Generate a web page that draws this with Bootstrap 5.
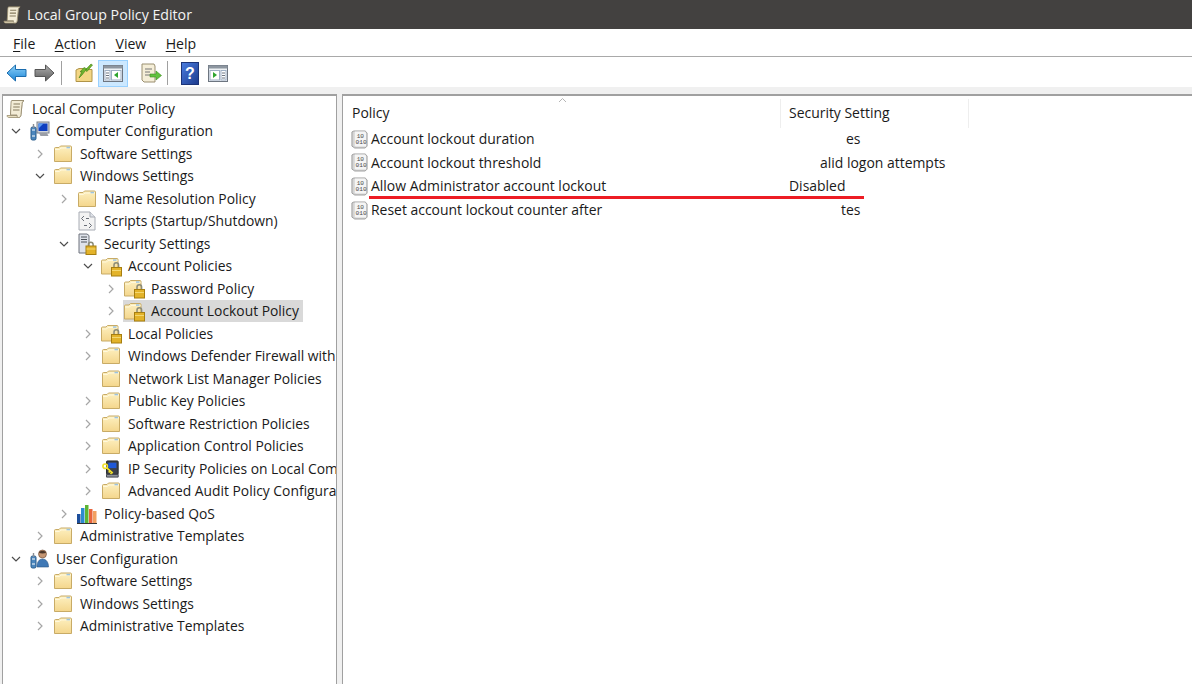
<!DOCTYPE html>
<html lang="en">
<head>
<meta charset="utf-8">
<title>Local Group Policy Editor</title>
<link href="https://cdn.jsdelivr.net/npm/bootstrap@5.3.0/dist/css/bootstrap.min.css" rel="stylesheet">
<style>
html,body{height:100%;}
body{font-family:"Open Sans","Noto Sans",sans-serif;font-size:13.85px;color:#1a1a1a;background:#f0f0f0;overflow:hidden;}
.app-shell{height:684px;position:relative;}
.title-strip{height:29px;background:#434140;color:#f4f4f4;padding-left:3px;gap:5px;font-size:14.2px;}
.menu-strip{height:28px;background:#fff;border-bottom:1px solid #a9a9a9;padding-left:13px;padding-top:2px;gap:19.400px;font-size:14.1px;}
.menu-strip span u{text-underline-offset:2px;text-decoration-thickness:1px;}
.tool-strip{height:30px;background:#fff;padding-left:5px;padding-top:2px;}
.tool-btn{width:22px;height:27px;display:flex;align-items:center;justify-content:center;}
.tool-btn.active-tool{width:30px;background:#cce8ff;border:1px solid #99d1ff;}
.tool-sep{width:1px;height:24px;background:#a0a0a0;}
.t-fwd{margin:0 6px;}
.t-sep1{margin-right:12px;margin-left:0;}
.t-up{margin-left:2px;margin-right:3px;}
.t-exp{margin-left:9px;margin-right:5px;}
.t-sep2{margin-right:11px;}
.t-help{margin-right:6px;}
.gap-band{height:7px;background:#f0f0f0;}
.panes{gap:5px;padding-left:2px;background:#f0f0f0;}
.tree-pane{width:335px;background:#fff;border-top:2px solid #a0a0a0;border-left:1px solid #a0a0a0;border-right:1px solid #a0a0a0;overflow:hidden;padding-top:1.5px;}
.detail-pane{background:#fff;border-top:2px solid #a0a0a0;border-left:1px solid #a0a0a0;position:relative;overflow:hidden;font-size:13.95px;}
.tree-row{height:22.5px;white-space:nowrap;}
.tree-row svg{flex:none;}
.chev{width:10px;height:10px;flex:none;margin-right:9px;}
.lv0{padding-left:3px;}
.lv1{padding-left:8px;}
.lv2{padding-left:32px;}
.lv3{padding-left:56px;}
.lv4{padding-left:80px;}
.lv5{padding-left:103px;}
.tree-label{margin-left:8px;padding-right:4px;line-height:22px;}
.lv0 .tree-label,.lv1 .tree-label{margin-left:6px;}
.wide-ico{margin-left:-1px;}
.wide-ico + .tree-label{margin-left:6px;}
.wide-ico.ico-20 + .tree-label{margin-left:7px;}
.chosen-item{background:#d9d9d9;margin-left:-2px;padding-left:2px;height:22px;}
.col-heads{height:31.6px;padding-top:3px;}
.head-one{width:438px;padding-left:9px;border-right:1px solid #eee;}
.head-two{width:188px;padding-left:8px;border-right:1px solid #eee;}
.sort-caret{position:absolute;left:215px;top:1px;}
.pol-row{height:23.6px;white-space:nowrap;}
.pol-name{width:438px;padding-left:8px;gap:3px;}
.pol-val{padding-left:8px;}
.cut-es{padding-left:65px;}
.cut-alid{padding-left:39px;}
.cut-tes{padding-left:60px;}
.red-rule{position:absolute;left:26px;top:100px;width:495px;height:3px;background:#ed1c24;}
</style>
</head>
<body>
<svg width="0" height="0" class="position-absolute">
<defs>
<linearGradient id="fy" x1="0" y1="0" x2="0" y2="1"><stop offset="0" stop-color="#fdf0c0"/><stop offset="1" stop-color="#f4d68c"/></linearGradient>
<linearGradient id="bl" x1="0" y1="0" x2="0" y2="1"><stop offset="0" stop-color="#8fd2f8"/><stop offset="1" stop-color="#1c86d8"/></linearGradient>
<linearGradient id="gr" x1="0" y1="0" x2="0" y2="1"><stop offset="0" stop-color="#b0b0b0"/><stop offset="1" stop-color="#5c5c5c"/></linearGradient>
<linearGradient id="hb" x1="0" y1="0" x2="1" y2="1"><stop offset="0" stop-color="#4a7de0"/><stop offset="1" stop-color="#1c3a8c"/></linearGradient>
<symbol id="scroll" viewBox="0 0 20 20">
<path d="M6 1.500h12c-1.500 1-2 2-2 4l-1 10c-.2 2-1 3-2.500 3H3c-1.200 0-2-.8-2-2h9.500l3-.2L4.500 15z" fill="#e9dfc0" stroke="#9a8f70" stroke-width=".8"/>
<path d="M6 1.500h12c-1.500 1-2 2-2 4l-1 10c-.2 2-1 3-2.500 3-1 0-1.800-1-1.500-2.500H4.500L5 4c.1-1.500.3-2.500 1-2.500z" fill="#f3ecd6" stroke="#8f8468" stroke-width=".8"/>
<path d="M7.500 5h6.500M7.200 8h6.500M7 11h6.500" stroke="#857a5e" stroke-width="1.200"/>
</symbol>
<symbol id="folder" viewBox="0 0 18 18">
<path d="M.5 16.500V3.500c0-.6.400-1 1-1h3.500l1.500-1.500h10c.6 0 1 .4 1 1V16.500z" fill="url(#fy)" stroke="#c8ab66"/>
<path d="M1 4.500h4.500l1.500-1.500h10" fill="none" stroke="#fff8dc"/>
<path d="M12.500 1.800h3.500v1.500h-3.500z" fill="#9cc3e0"/>
</symbol>
<symbol id="lockfolder" viewBox="0 0 21 21">
<path d="M.5 18V5c0-.6.400-1 1-1h3.500L6.500 2.500h9.500c.6 0 1 .4 1 1V18z" fill="url(#fy)" stroke="#c8ab66"/>
<path d="M1 6h4.500l1.500-1.500h9.500" fill="none" stroke="#fff8dc"/>
<path d="M12 3.300h3.500v1.500h-3.500z" fill="#9cc3e0"/>
<path d="M13 11.500V9a2.300 2.300 0 0 1 4.600 0v2.500" fill="none" stroke="#8c8c78" stroke-width="1.500"/>
<rect x="10.500" y="11.500" width="10" height="8.500" fill="#e3b32a" stroke="#a67e10"/>
<path d="M11 14.500h9" stroke="#f4d870"/>
</symbol>
<symbol id="pc" viewBox="0 0 20 20">
<rect x="7" y="1" width="12" height="11" fill="#cfd3da" stroke="#7d828c"/>
<rect x="8.500" y="2.500" width="9" height="7.500" fill="#0f3fc0"/>
<path d="M8.500 2.500h5l-5 5z" fill="#5b9bf0"/>
<path d="M9 12h8l1.500 3h-8z" fill="#9a9ea6"/>
<rect x="1" y="6" width="5" height="13" rx="1.500" fill="#4b86bd" stroke="#2a5c8c"/>
<path d="M2 9h3M2 15h3" stroke="#fff" stroke-width="1.200"/>
<rect x="2.800" y="3" width="1.400" height="4" fill="#8a8f96"/>
</symbol>
<symbol id="usercfg" viewBox="0 0 20 20">
<circle cx="12.500" cy="5" r="4" fill="#c59673" stroke="#6b4630" stroke-width=".6"/>
<path d="M9 4c.5-3 6.500-3 7 0-2 .5-5 .5-7 0z" fill="#4b372a"/>
<path d="M7 18c0-5 2-8 5.500-8s6 3 6 8z" fill="#3f78b5" stroke="#2a5584" stroke-width=".6"/>
<rect x="1" y="7" width="5" height="12" rx="1.500" fill="#4b86bd" stroke="#2a5c8c"/>
<path d="M2 10h3M2 15h3" stroke="#fff" stroke-width="1.200"/>
<rect x="2.800" y="4" width="1.400" height="4" fill="#8a8f96"/>
</symbol>
<symbol id="script" viewBox="0 0 18 20">
<path d="M1 1h11l5 5v13H1z" fill="#f3f3f3" stroke="#a8acb4"/>
<path d="M12 1v5h5" fill="#dfe2e8" stroke="#a8acb4"/>
<path d="M6 5L3.500 7.500 6 10M8 7.500h3M11 12l2.500 2.500L11 17M6 14.500h3" fill="none" stroke="#6a6f78"/>
</symbol>
<symbol id="server" viewBox="0 0 20 22">
<path d="M2 1h8l2 1.500V20H2z" fill="#dfe3ea" stroke="#6e737c"/>
<path d="M4 4h6M4 6.500h6M4 9h6" stroke="#4d525a"/>
<path d="M11.500 13v-1.500a2.300 2.300 0 0 1 4.600 0V13" fill="none" stroke="#8c8c78" stroke-width="1.500"/>
<rect x="9" y="13" width="10" height="8.500" fill="#e3b32a" stroke="#a67e10"/>
<path d="M9.500 16h9" stroke="#f4d870"/>
</symbol>
<symbol id="ipsec" viewBox="0 0 20 20">
<rect x="5" y="1" width="13" height="15" rx="1" fill="#3d4148" stroke="#1f2226"/>
<rect x="7" y="3" width="9" height="6" fill="#1f58d8"/>
<path d="M5 16h13v3H5z" fill="#8c9098" stroke="#3d4148"/>
<circle cx="3.500" cy="7" r="2.500" fill="none" stroke="#f2e02a" stroke-width="1.800"/>
<path d="M5 8.500l7 6M9 12l-1.500 2M11 13.500l-1.500 2" stroke="#f2e02a" stroke-width="1.800" fill="none"/>
</symbol>
<symbol id="qos" viewBox="0 0 20 20">
<rect x="0" y="10" width="3.500" height="9" fill="#1d4f9c"/>
<rect x="4" y="4" width="3.500" height="15" fill="#2c8bd0"/>
<rect x="8" y="1" width="3.500" height="18" fill="#5cb534"/>
<rect x="12" y="5" width="3.500" height="14" fill="#e8643c"/>
<rect x="16" y="7" width="3.500" height="12" fill="#f2a060"/>
<path d="M0 19.500h20" stroke="#333"/>
</symbol>
<symbol id="policy" viewBox="0 0 18 20">
<path d="M1 2l2-1h12l2 2v14l-2 2H4l-3-2z" fill="#d5d5d5" stroke="#9a9a9a"/>
<path d="M4 1.500h10.500L16 3v14.500H5L4 16z" fill="#f5f5f5"/>
<text x="6" y="8" font-size="6.500" font-family="Liberation Mono,monospace" fill="#4a4a4a">10</text>
<text x="4.800" y="15" font-size="6.500" font-family="Liberation Mono,monospace" fill="#4a4a4a">010</text>
</symbol>
<symbol id="chevr" viewBox="0 0 10 10"><path d="M3 1l4 4-4 4" fill="none" stroke="#a6a6a6" stroke-width="1.200"/></symbol>
<symbol id="chevd" viewBox="0 0 10 10"><path d="M1 3l4 4 4-4" fill="none" stroke="#4d4d4d" stroke-width="1.200"/></symbol>
</defs>
</svg>

<div class="app-shell d-flex flex-column">
  <div class="title-strip d-flex align-items-center">
    <svg width="19" height="20"><use href="#scroll"/></svg>
    <span>Local Group Policy Editor</span>
  </div>
  <div class="menu-strip d-flex align-items-center">
    <span><u>F</u>ile</span><span><u>A</u>ction</span><span><u>V</u>iew</span><span><u>H</u>elp</span>
  </div>
  <div class="tool-strip d-flex align-items-center">
    <div class="tool-btn"><svg width="21" height="18" viewBox="0 0 21 18"><path d="M1 9L9.500 1v4.500H20v7H9.500V17z" fill="url(#bl)" stroke="#1a6cae" stroke-linejoin="round"/></svg></div>
    <div class="tool-btn t-fwd"><svg width="21" height="18" viewBox="0 0 21 18"><path d="M20 9L11.500 1v4.500H1v7h10.500V17z" fill="url(#gr)" stroke="#555" stroke-linejoin="round"/></svg></div>
    <div class="tool-sep t-sep1"></div>
    <div class="tool-btn"><svg width="20" height="20" viewBox="0 0 20 20"><path d="M1 18.500V7l3-1.500h5l1 1h7v12z" fill="#f3d684" stroke="#b09448"/><path d="M4 15l3-6.500-2 .5 4-4.500L12 6l-1.500.8L16 1l1.500 1L12 8.500l-1.500-1L7 12z" fill="#6fb52e" stroke="#3f7f14" stroke-width=".6"/></svg></div>
    <div class="tool-btn active-tool t-up"><svg width="20" height="17" viewBox="0 0 20 17"><rect x=".5" y=".5" width="19" height="16" fill="#eef1f4" stroke="#6d7580"/><path d="M.5.5h19v3H.5z" fill="#8d96a0"/><rect x="2" y="5.500" width="5" height="9.500" fill="#fff" stroke="#9fb0c4"/><path d="M3 8h3M3 10.500h3M3 13h3" stroke="#6d7580"/><rect x="8.500" y="5.500" width="9.500" height="9.500" fill="#fff" stroke="#9fb0c4"/><path d="M15 7v6l-4-3z" fill="#2ea52e"/></svg></div>
    <div class="tool-btn t-exp"><svg width="21" height="21" viewBox="0 0 21 21"><path d="M1 1h12l1 2v16H3l-2-2z" fill="#f5eed8" stroke="#9a8f70"/><path d="M4 6h7M4 9h5M4 12h5" stroke="#777"/><path d="M9 11h6V8l5.500 4.500L15 17v-3H9z" fill="#62c23e" stroke="#3f8f22" stroke-width=".6"/></svg></div>
    <div class="tool-sep t-sep2"></div>
    <div class="tool-btn t-help"><svg width="18" height="23" viewBox="0 0 18 23"><rect x=".5" y=".5" width="17" height="22" fill="url(#hb)" stroke="#1c3478"/><text x="9" y="17" text-anchor="middle" font-size="16" font-weight="700" font-family="Liberation Sans,sans-serif" fill="#fff">?</text></svg></div>
    <div class="tool-btn"><svg width="20" height="17" viewBox="0 0 20 17"><rect x=".5" y=".5" width="19" height="16" fill="#eef1f4" stroke="#6d7580"/><path d="M.5.5h19v3H.5z" fill="#8d96a0"/><rect x="13" y="5.500" width="5" height="9.500" fill="#fff" stroke="#9fb0c4"/><path d="M14 8h3M14 10.500h3M14 13h3" stroke="#6d7580"/><rect x="2" y="5.500" width="9.500" height="9.500" fill="#fff" stroke="#9fb0c4"/><path d="M5 7v6l4-3z" fill="#2ea52e"/></svg></div>
  </div>
  <div class="gap-band"></div>
  <div class="panes d-flex flex-grow-1">
    <div class="tree-pane">
      <div class="tree-row lv0 d-flex align-items-center"><svg width="20" height="20"><use href="#scroll"/></svg><span class="tree-label">Local Computer Policy</span></div>
      <div class="tree-row lv1 d-flex align-items-center"><svg class="chev"><use href="#chevd"/></svg><svg width="20" height="20"><use href="#pc"/></svg><span class="tree-label">Computer Configuration</span></div>
      <div class="tree-row lv2 d-flex align-items-center"><svg class="chev"><use href="#chevr"/></svg><svg width="18" height="18"><use href="#folder"/></svg><span class="tree-label">Software Settings</span></div>
      <div class="tree-row lv2 d-flex align-items-center"><svg class="chev"><use href="#chevd"/></svg><svg width="18" height="18"><use href="#folder"/></svg><span class="tree-label">Windows Settings</span></div>
      <div class="tree-row lv3 d-flex align-items-center"><svg class="chev"><use href="#chevr"/></svg><svg width="18" height="18"><use href="#folder"/></svg><span class="tree-label">Name Resolution Policy</span></div>
      <div class="tree-row lv3 d-flex align-items-center"><span class="chev"></span><svg width="18" height="20"><use href="#script"/></svg><span class="tree-label">Scripts (Startup/Shutdown)</span></div>
      <div class="tree-row lv3 d-flex align-items-center"><svg class="chev"><use href="#chevd"/></svg><svg class="wide-ico ico-20" width="20" height="22"><use href="#server"/></svg><span class="tree-label">Security Settings</span></div>
      <div class="tree-row lv4 d-flex align-items-center"><svg class="chev"><use href="#chevd"/></svg><svg class="wide-ico" width="21" height="21"><use href="#lockfolder"/></svg><span class="tree-label">Account Policies</span></div>
      <div class="tree-row lv5 d-flex align-items-center"><svg class="chev"><use href="#chevr"/></svg><svg class="wide-ico" width="21" height="21"><use href="#lockfolder"/></svg><span class="tree-label">Password Policy</span></div>
      <div class="tree-row lv5 d-flex align-items-center"><svg class="chev"><use href="#chevr"/></svg><span class="chosen-item d-flex align-items-center"><svg class="wide-ico" width="21" height="21"><use href="#lockfolder"/></svg><span class="tree-label">Account Lockout Policy</span></span></div>
      <div class="tree-row lv4 d-flex align-items-center"><svg class="chev"><use href="#chevr"/></svg><svg class="wide-ico" width="21" height="21"><use href="#lockfolder"/></svg><span class="tree-label">Local Policies</span></div>
      <div class="tree-row lv4 d-flex align-items-center"><svg class="chev"><use href="#chevr"/></svg><svg width="18" height="18"><use href="#folder"/></svg><span class="tree-label">Windows Defender Firewall with Advanced Security</span></div>
      <div class="tree-row lv4 d-flex align-items-center"><span class="chev"></span><svg width="18" height="18"><use href="#folder"/></svg><span class="tree-label">Network List Manager Policies</span></div>
      <div class="tree-row lv4 d-flex align-items-center"><svg class="chev"><use href="#chevr"/></svg><svg width="18" height="18"><use href="#folder"/></svg><span class="tree-label">Public Key Policies</span></div>
      <div class="tree-row lv4 d-flex align-items-center"><svg class="chev"><use href="#chevr"/></svg><svg width="18" height="18"><use href="#folder"/></svg><span class="tree-label">Software Restriction Policies</span></div>
      <div class="tree-row lv4 d-flex align-items-center"><svg class="chev"><use href="#chevr"/></svg><svg width="18" height="18"><use href="#folder"/></svg><span class="tree-label">Application Control Policies</span></div>
      <div class="tree-row lv4 d-flex align-items-center"><svg class="chev"><use href="#chevr"/></svg><svg width="18" height="18"><use href="#ipsec"/></svg><span class="tree-label">IP Security Policies on Local Computer</span></div>
      <div class="tree-row lv4 d-flex align-items-center"><svg class="chev"><use href="#chevr"/></svg><svg width="18" height="18"><use href="#folder"/></svg><span class="tree-label">Advanced Audit Policy Configuration</span></div>
      <div class="tree-row lv3 d-flex align-items-center"><svg class="chev"><use href="#chevr"/></svg><svg class="wide-ico ico-20" width="20" height="20"><use href="#qos"/></svg><span class="tree-label">Policy-based QoS</span></div>
      <div class="tree-row lv2 d-flex align-items-center"><svg class="chev"><use href="#chevr"/></svg><svg width="18" height="18"><use href="#folder"/></svg><span class="tree-label">Administrative Templates</span></div>
      <div class="tree-row lv1 d-flex align-items-center"><svg class="chev"><use href="#chevd"/></svg><svg width="20" height="20"><use href="#usercfg"/></svg><span class="tree-label">User Configuration</span></div>
      <div class="tree-row lv2 d-flex align-items-center"><svg class="chev"><use href="#chevr"/></svg><svg width="18" height="18"><use href="#folder"/></svg><span class="tree-label">Software Settings</span></div>
      <div class="tree-row lv2 d-flex align-items-center"><svg class="chev"><use href="#chevr"/></svg><svg width="18" height="18"><use href="#folder"/></svg><span class="tree-label">Windows Settings</span></div>
      <div class="tree-row lv2 d-flex align-items-center"><svg class="chev"><use href="#chevr"/></svg><svg width="18" height="18"><use href="#folder"/></svg><span class="tree-label">Administrative Templates</span></div>
    </div>
    <div class="detail-pane flex-grow-1">
      <svg class="sort-caret" width="9" height="6" viewBox="0 0 9 6"><path d="M1 5l3.500-3.500L8 5" fill="none" stroke="#b5b5b5"/></svg>
      <div class="col-heads d-flex align-items-center">
        <div class="head-one d-flex align-items-center h-100">Policy</div>
        <div class="head-two d-flex align-items-center h-100">Security Setting</div>
      </div>
      <div class="pol-row d-flex align-items-center"><div class="pol-name d-flex align-items-center"><svg width="17" height="19"><use href="#policy"/></svg><span>Account lockout duration</span></div><div class="pol-val cut-es">es</div></div>
      <div class="pol-row d-flex align-items-center"><div class="pol-name d-flex align-items-center"><svg width="17" height="19"><use href="#policy"/></svg><span>Account lockout threshold</span></div><div class="pol-val cut-alid">alid logon attempts</div></div>
      <div class="pol-row d-flex align-items-center"><div class="pol-name d-flex align-items-center"><svg width="17" height="19"><use href="#policy"/></svg><span>Allow Administrator account lockout</span></div><div class="pol-val">Disabled</div></div>
      <div class="pol-row d-flex align-items-center"><div class="pol-name d-flex align-items-center"><svg width="17" height="19"><use href="#policy"/></svg><span>Reset account lockout counter after</span></div><div class="pol-val cut-tes">tes</div></div>
      <div class="red-rule"></div>
    </div>
  </div>
</div>
<script src="https://cdn.jsdelivr.net/npm/bootstrap@5.3.0/dist/js/bootstrap.bundle.min.js"></script>
</body>
</html>
